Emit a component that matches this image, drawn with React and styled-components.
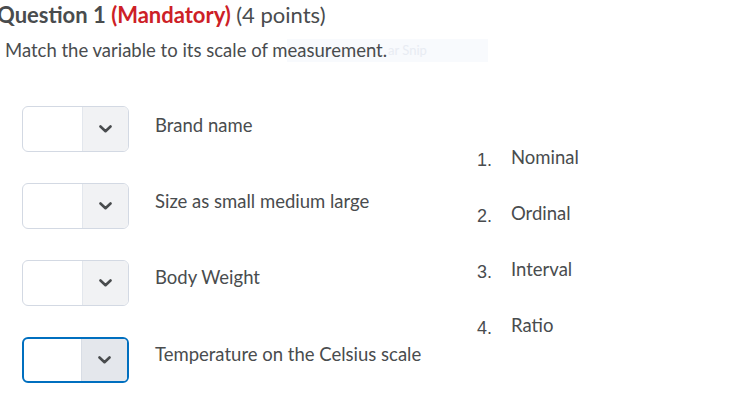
import React from "react"
import styled, { createGlobalStyle } from 'styled-components'

const Global = createGlobalStyle`
  html, body {
    margin: 0;
    padding: 0;
    background: #fff;
  }
  body {
    font-family: Lato, 'Open Sans', sans-serif;
    color: #494c4e;
    overflow: hidden;
  }
`

const Page = styled.div`
  width: 756px;
  height: 415px;
  position: relative;
`

const Heading = styled.h2`
  margin: 0;
  padding-top: 0;
  margin-left: -3px;
  font-size: 22px;
  line-height: 30px;
  font-weight: 700;
  color: #494c4e;
  span.req{
    color: #cd2026;
  }
  span.pts{
    font-weight: 400;
  }
`

const Prompt = styled.div`
  position: relative;
  margin: 8px 0 0 5px;
  font-size: 18.5px;
  line-height: 24px;
  > p{
    position: relative;
    margin: 0;
    z-index: 1;
  }
`

/* faint leftover of a screen-snip tooltip lying behind the prompt */
const Snip = styled.div`
  position: absolute;
  left: 282px;
  top: 1px;
  width: 201px;
  height: 23px;
  background: #f8fafd;
  color: #e8ecf3;
  font-size: 13px;
  line-height: 23px;
  padding-left: 101px;
  box-sizing: border-box;
  white-space: nowrap;
`

const Body = styled.div`
  display: flex;
  margin-top: 44px;
  padding-left: 22px;
`

const Choices = styled.div`
  display: flex;
  flex-direction: column;
  gap: 31px;
  width: 455px;
`

const Row = styled.div`
  display: flex;
  align-items: flex-start;
  gap: 26px;
`

const Select = styled.div`
  width: 107px;
  height: 46px;
  box-sizing: border-box;
  display: flex;
  border: ${x => x.focus ? '2px solid #006fbf' : '1px solid #d3d9e3'};
  border-radius: 6px;
  overflow: hidden;
  background: #fff;
`

const SelectValue = styled.div`
  flex: 1;
`

const SelectArrow = styled.div`
  width: 45px;
  display: flex;
  align-items: center;
  justify-content: center;
  border-left: 1px solid ${x => x.focus ? '#d8dde5' : '#e3e7ed'};
  background: ${x => x.focus ? '#e4e7ec' : '#f1f2f4'};
`

const Label = styled.div`
  font-size: 18.5px;
  line-height: 24px;
  padding-top: ${x => x.offset}px;
`

const Options = styled.ol`
  list-style: none;
  margin: 0;
  padding: 39px 0 0 0;
  display: flex;
  flex-direction: column;
  gap: 32px;
`

const Option = styled.li`
  display: flex;
  align-items: flex-start;
  height: 24px;
  > b{
    width: 34px;
    font-family: 'Liberation Sans', Arial, sans-serif;
    font-weight: 400;
    font-size: 18px;
    line-height: 24px;
    padding-top: 3px;
  }
  > span{
    font-size: 18.5px;
    line-height: 24px;
  }
`

const Chevron = () =>
  <svg width="13" height="8" viewBox="0 0 13 8">
    <path d="M1.5 1.5 L6.5 6.2 L11.5 1.5" fill="none" stroke="#494c4e" strokeWidth="2.6" strokeLinecap="round" strokeLinejoin="round" />
  </svg>

const rows = [
  { text: 'Brand name', offset: 7 },
  { text: 'Size as small medium large', offset: 6 },
  { text: 'Body Weight', offset: 5 },
  { text: 'Temperature on the Celsius scale', offset: 5, focus: true },
]

const options = ['Nominal', 'Ordinal', 'Interval', 'Ratio']

export default () =>
  <Page>
    <Global />
    <Heading>
      Question 1 <span className="req">(Mandatory)</span> <span className="pts">(4 points)</span>
    </Heading>

    <Prompt>
      <Snip>ar Snip</Snip>
      <p>Match the variable to its scale of measurement.</p>
    </Prompt>

    <Body>
      <Choices>
        {rows.map(r =>
          <Row key={r.text}>
            <Select focus={r.focus}>
              <SelectValue />
              <SelectArrow focus={r.focus}><Chevron /></SelectArrow>
            </Select>
            <Label offset={r.offset}>{r.text}</Label>
          </Row>
        )}
      </Choices>

      <Options>
        {options.map((o, i) =>
          <Option key={o}><b>{i + 1}.</b><span>{o}</span></Option>
        )}
      </Options>
    </Body>
  </Page>
